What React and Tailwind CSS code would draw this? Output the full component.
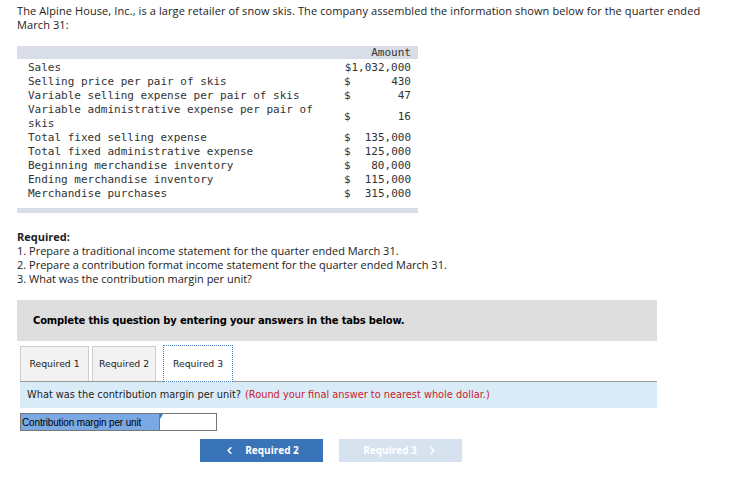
import { ChevronLeft, ChevronRight } from "lucide-react";

export default function App() {
  const rows = [
    ["Sales", "", "$1,032,000"],
    ["Selling price per pair of skis", "$", "430"],
    ["Variable selling expense per pair of skis", "$", "47"],
    ["Variable administrative expense per pair of skis", "$", "16"],
    ["Total fixed selling expense", "$", "135,000"],
    ["Total fixed administrative expense", "$", "125,000"],
    ["Beginning merchandise inventory", "$", "80,000"],
    ["Ending merchandise inventory", "$", "115,000"],
    ["Merchandise purchases", "$", "315,000"],
  ];
  return (
    <div className="bg-white w-[733px] h-[491px] overflow-hidden pl-[17px] text-[#222] font-['Open_Sans',sans-serif]">
      <p className="pt-[4px] text-[11px] leading-[14px] w-[700px] tracking-[0.1px]">
        The Alpine House, Inc., is a large retailer of snow skis. The company assembled the information shown below for the quarter ended March 31:
      </p>

      <div className="mt-[14px] w-[401px] font-['DejaVu_Sans_Mono',monospace] text-[11px] text-[#333]">
        <div className="h-[13px] bg-[#d9dde8] flex justify-end pr-[7px] leading-[13px]">Amount</div>
        <div className="pt-[2px]">
          {rows.map((r, i) => (
            <div key={i} className="flex items-center leading-[14px]">
              <div className="w-[327px] pl-[11px] pr-[4px]">{r[0]}</div>
              <div className="w-[67px] flex justify-between">
                <span>{r[1]}</span>
                <span>{r[2]}</span>
              </div>
            </div>
          ))}
        </div>
        <div className="mt-[7px] h-[5px] bg-[#d9dde8]" />
      </div>

      <div className="mt-[17px] text-[11px] leading-[14px] text-[#222]">
        <div className="font-bold">Required:</div>
        <div>1. Prepare a traditional income statement for the quarter ended March 31.</div>
        <div>2. Prepare a contribution format income statement for the quarter ended March 31.</div>
        <div>3. What was the contribution margin per unit?</div>
      </div>

      <div className="mt-[14px] w-[640px] h-[41px] bg-[#dedede] flex items-center pl-[16px] font-['DejaVu_Sans',sans-serif] text-[10px] font-bold text-black tracking-[-0.18px]">
        Complete this question by entering your answers in the tabs below.
      </div>

      <div className="ml-[3px] w-[637px] mt-[5px] font-['DejaVu_Sans',sans-serif] text-[9.3px] text-[#222]">
        <div className="flex items-end h-[35px] gap-[3px]">
          <div className="w-[69px] h-[35px] bg-[#f2f2f2] border border-[#ccc] border-b-0 flex items-center justify-center">Required 1</div>
          <div className="w-[64px] h-[35px] bg-[#f2f2f2] border border-[#ccc] border-b-0 flex items-center justify-center">Required 2</div>
          <div className="ml-[4px] w-[70px] h-[37px] -mb-[1px] bg-white border border-dotted border-[#4a7fc1] flex items-center justify-center relative z-10">Required 3</div>
        </div>
        <div className="h-[27px] bg-[#daebf8] border-t border-[#999] flex items-center pl-[7px] text-[9.8px]">
          <span className="text-[#222]">What was the contribution margin per unit?</span>
          <span className="ml-[4px] text-[#c8202a]">(Round your final answer to nearest whole dollar.)</span>
        </div>
        <div className="mt-[5px] flex h-[18px]">
          <div className="w-[140px] h-[18px] bg-[#7aa9e3] border border-[#777] flex items-center pl-[1px] text-[10px] text-black font-['Liberation_Sans',sans-serif] tracking-[-0.15px]">Contribution margin per unit</div>
          <div className="w-[57px] h-[18px] bg-white border border-[#777] border-l-0 relative">
            <div className="absolute left-0 top-0 w-0 h-0 border-t-[5px] border-t-[#3a74b8] border-r-[3px] border-r-transparent" />
          </div>
        </div>
        <div className="mt-[8px] flex gap-[16px] ml-[180px] font-['Open_Sans',sans-serif] text-[10px] font-bold">
          <div className="w-[123px] h-[23px] bg-[#3a74b8] text-white flex items-center justify-center gap-[10px]">
            <ChevronLeft size={11} strokeWidth={3.5} />
            <span>Required 2</span>
          </div>
          <div className="w-[123px] h-[23px] bg-[#d6e2f0] text-white flex items-center justify-center gap-[10px]">
            <span>Required 3</span>
            <ChevronRight size={11} strokeWidth={3.5} />
          </div>
        </div>
      </div>
    </div>
  );
}
